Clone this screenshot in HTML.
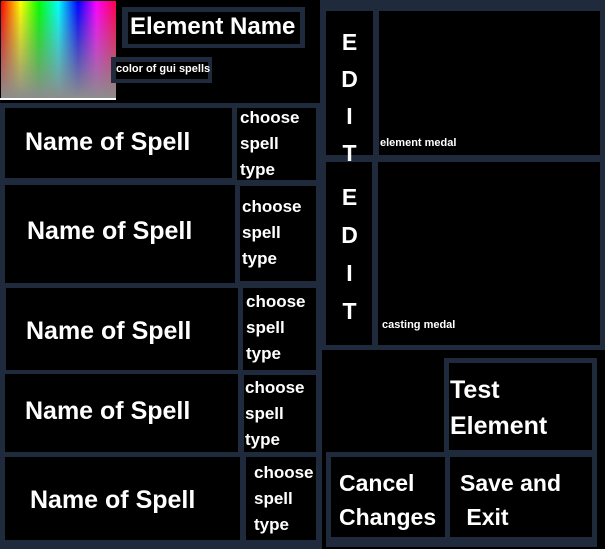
<!DOCTYPE html>
<html><head><meta charset="utf-8"><style>
body{margin:0;width:605px;height:549px;background:#1f2b3d;position:relative;overflow:hidden;font-family:"Liberation Sans",sans-serif;font-weight:bold;color:#fff}
div{position:absolute;box-sizing:border-box}
.b{background:#000}
.n{background:#1f2b3d}
.sp{font-size:25px;white-space:nowrap}
.ct{font-size:17px;line-height:26px}
.ed{font-size:23px;width:47px;text-align:center;line-height:37px}
.sm{font-size:11px;white-space:nowrap}
</style></head><body>
<div class="b" style="left:0;top:0;width:320px;height:103px"></div>
<div style="left:1px;top:1px;width:115px;height:97px;background:linear-gradient(to bottom,rgba(140,140,140,0) 0%,rgba(140,140,140,1) 100%),linear-gradient(to right,#f00,#ff0 17%,#0f0 33%,#0ff 50%,#00f 67%,#f0f 83%,#f04 100%)"></div>
<div style="left:0;top:98px;width:116px;height:2px;background:#fff"></div>
<div class="n" style="left:122px;top:7px;width:183px;height:41px"></div>
<div class="b" style="left:128px;top:12px;width:172px;height:32px"></div>
<div style="left:130px;top:13px;font-size:24px;white-space:nowrap">Element Name</div>
<div class="n" style="left:111px;top:57px;width:101px;height:26px"></div>
<div class="b" style="left:116px;top:62px;width:92px;height:17px"></div>
<div class="sm" style="left:116px;top:63px">color of gui spells</div>

<div class="b" style="left:5px;top:108px;width:227px;height:70px"></div>
<div class="b" style="left:237px;top:108px;width:79px;height:72px"></div>
<div class="sp" style="left:25px;top:128px">Name of Spell</div>
<div class="ct" style="left:240px;top:105px">choose<br>spell<br>type</div>

<div class="b" style="left:5px;top:185px;width:230px;height:98px"></div>
<div class="b" style="left:240px;top:186px;width:76px;height:95px"></div>
<div class="sp" style="left:27px;top:217px">Name of Spell</div>
<div class="ct" style="left:242px;top:194px">choose<br>spell<br>type</div>

<div class="b" style="left:6px;top:288px;width:232px;height:82px"></div>
<div class="b" style="left:243px;top:288px;width:73px;height:82px"></div>
<div class="sp" style="left:26px;top:317px">Name of Spell</div>
<div class="ct" style="left:246px;top:289px">choose<br>spell<br>type</div>

<div class="b" style="left:5px;top:374px;width:233px;height:78px"></div>
<div class="b" style="left:244px;top:375px;width:72px;height:77px"></div>
<div class="sp" style="left:25px;top:397px">Name of Spell</div>
<div class="ct" style="left:245px;top:375px">choose<br>spell<br>type</div>

<div class="b" style="left:5px;top:457px;width:235px;height:83px"></div>
<div class="b" style="left:246px;top:457px;width:70px;height:83px"></div>
<div class="sp" style="left:30px;top:486px">Name of Spell</div>
<div class="ct" style="left:254px;top:460px">choose<br>spell<br>type</div>

<div class="b" style="left:326px;top:11px;width:47px;height:144px"></div>
<div class="b" style="left:379px;top:11px;width:221px;height:144px"></div>
<div class="ed" style="left:326px;top:24px">E<br>D<br>I<br>T</div>
<div class="sm" style="left:380px;top:137px">element medal</div>

<div class="b" style="left:326px;top:162px;width:46px;height:183px"></div>
<div class="b" style="left:378px;top:162px;width:222px;height:183px"></div>
<div class="ed" style="left:326px;top:178px;line-height:38px">E<br>D<br>I<br>T</div>
<div class="sm" style="left:382px;top:319px">casting medal</div>

<div class="b" style="left:322px;top:350px;width:283px;height:199px"></div>
<div class="n" style="left:444px;top:358px;width:153px;height:189px"></div>
<div class="n" style="left:326px;top:452px;width:271px;height:95px"></div>
<div class="b" style="left:449px;top:363px;width:143px;height:87px"></div>
<div class="b" style="left:331px;top:457px;width:114px;height:80px"></div>
<div class="b" style="left:450px;top:457px;width:142px;height:80px"></div>
<div style="left:450px;top:372px;font-size:25px;line-height:36px">Test<br>Element</div>
<div style="left:339px;top:466px;font-size:23px;line-height:34px;white-space:nowrap">Cancel<br>Changes</div>
<div style="left:460px;top:466px;font-size:23px;line-height:34px;white-space:nowrap">Save and<br>&nbsp;Exit</div>
</body></html>
